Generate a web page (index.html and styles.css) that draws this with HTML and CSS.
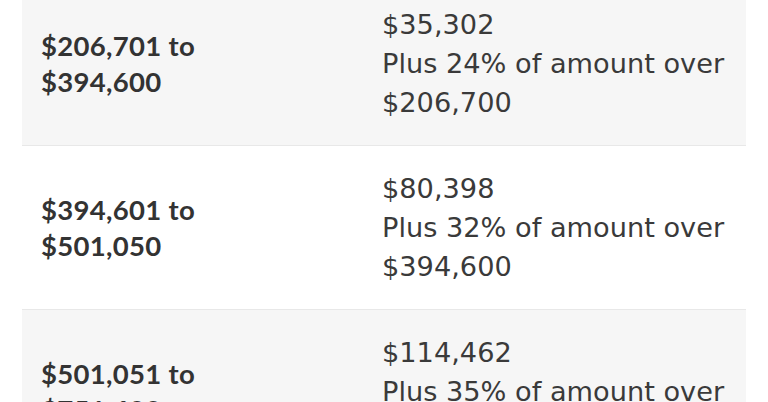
FILE: index.html
```html
<!DOCTYPE html>
<html>
<head>
<meta charset="utf-8">
<link rel="stylesheet" href="styles.css">
</head>
<body>
<div class="table">
  <div class="row shade">
    <div class="range">$206,701 to<br>$394,600</div>
    <div class="tax">$35,302<br>Plus 24% of amount over<br>$206,700</div>
  </div>
  <div class="row">
    <div class="range">$394,601 to<br>$501,050</div>
    <div class="tax">$80,398<br>Plus 32% of amount over<br>$394,600</div>
  </div>
  <div class="row shade">
    <div class="range">$501,051 to<br>$751,600</div>
    <div class="tax">$114,462<br>Plus 35% of amount over<br>$501,050</div>
  </div>
</div>
</body>
</html>
```
FILE: styles.css
```css
html, body {
  margin: 0;
  padding: 0;
  background: #ffffff;
  overflow: hidden;
}
.table {
  margin: -18px 22px 0 22px;
  width: 724px;
  color: #333333;
}
.row {
  display: grid;
  grid-template-columns: 360px 1fr;
  align-items: center;
  padding: 23px 0;
  border-bottom: 1px solid #e8e8e8;
}
.shade {
  background: #f6f6f6;
}
.range {
  padding-left: 19px;
  font-family: "Lato", "Liberation Sans", sans-serif;
  font-weight: 700;
  font-size: 27.5px;
  letter-spacing: 0.3px;
  line-height: 36px;
}
.tax {
  font-family: "DejaVu Sans", "Liberation Sans", sans-serif;
  font-size: 27.2px;
  line-height: 39px;
  color: #3a3a3a;
}
```
